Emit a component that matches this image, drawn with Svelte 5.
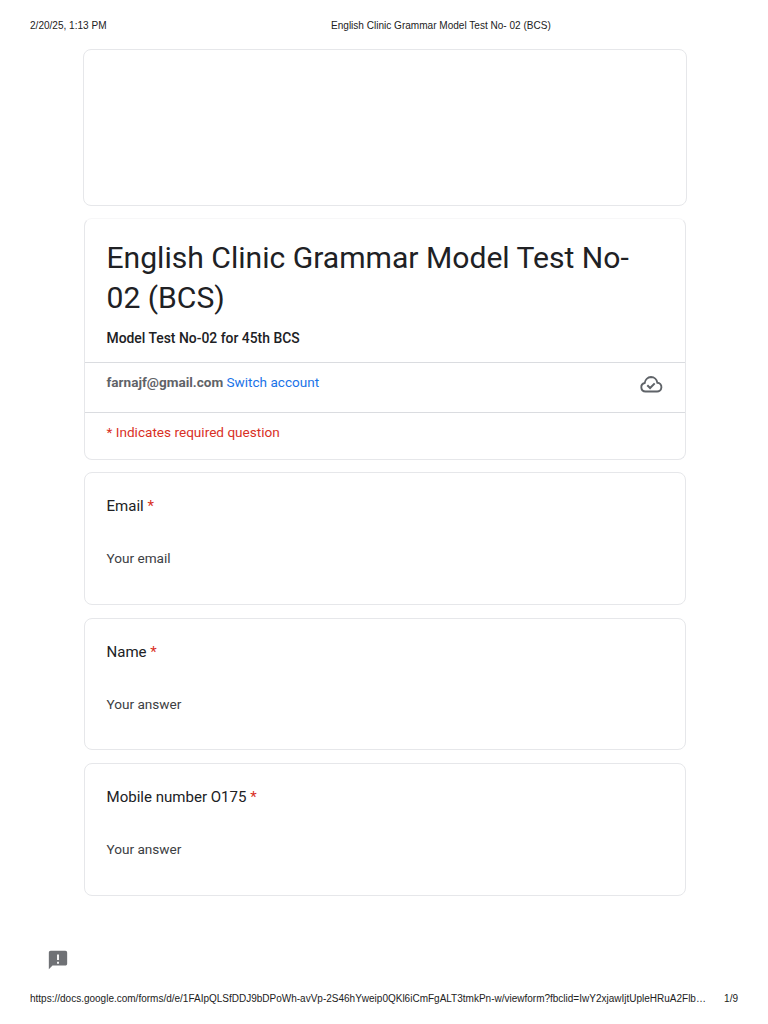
<script>
    const questions = [
        { label: "Email", hint: "Your email" },
        { label: "Name", hint: "Your answer" },
        { label: "Mobile number O175", hint: "Your answer" }
    ];
</script>

<div class="page">
    <header class="print-head">
        <span>2/20/25, 1:13 PM</span>
        <span class="doc-title">English Clinic Grammar Model Test No- 02 (BCS)</span>
    </header>

    <main class="form">
        <div class="banner"></div>

        <section class="card intro">
            <div class="intro-top">
                <h1>English Clinic Grammar Model Test No-02 (BCS)</h1>
                <p class="desc">Model Test No-02 for 45th BCS</p>
            </div>
            <div class="account">
                <div><b>farnajf@gmail.com</b> <span class="link">Switch account</span></div>
                <svg class="cloud" width="24" height="24" viewBox="0 0 24 24" fill="none" stroke="#5f6368" stroke-width="1.9">
                    <path d="M6.500 19.500a4.300 4.300 0 0 1-.8-8.500A6.800 6.800 0 0 1 12 5a6.500 6.500 0 0 1 6.300 5.700 4.400 4.400 0 0 1-.6 8.800z" />
                    <path d="M8.300 13.200l2.800 2.800 4.600-4.600" stroke-width="2" />
                </svg>
            </div>
            <div class="required">* Indicates required question</div>
        </section>

        {#each questions as q}
            <section class="card question">
                <div class="label">{q.label} <span class="star">*</span></div>
                <div class="hint">{q.hint}</div>
            </section>
        {/each}
    </main>

    <svg class="report" width="22" height="22" viewBox="0 0 24 24" fill="#6f7175">
        <path d="M20 2H4c-1.100 0-2 .9-2 2v18l4-4h14c1.100 0 2-.9 2-2V4c0-1.100-.9-2-2-2z" />
        <path d="M11 6h2v6h-2zM11 14h2v2h-2z" fill="#fff" />
    </svg>

    <footer class="print-foot">
        <span class="url">https://docs.google.com/forms/d/e/1FAIpQLSfDDJ9bDPoWh-avVp-2S46hYweip0QKl6iCmFgALT3tmkPn-w/viewform?fbclid=IwY2xjawIjtUpleHRuA2Flb…</span>
        <span>1/9</span>
    </footer>
</div>

<style>
    :global(body) {
        background: #fff;
    }

    .page {
        height: 1024px;
        box-sizing: border-box;
        padding: 19px 30px 0;
        display: flex;
        flex-direction: column;
        position: relative;
        font-family: Roboto, sans-serif;
        color: #202124;
        overflow: hidden;
    }

    .print-head,
    .print-foot {
        font-family: "Liberation Sans", Arial, sans-serif;
        font-size: 10px;
        line-height: 13px;
        color: #222;
    }

    .print-head {
        position: relative;
        height: 13px;
        font-size: 10.05px;
    }

    .doc-title {
        position: absolute;
        left: 301px;
        top: 0;
    }

    .form {
        margin: 17px 0 0 53px;
        width: 604px;
        display: flex;
        flex-direction: column;
    }

    .banner {
        height: 157px;
        border: 1.5px solid #e6e7ea;
        border-radius: 8px;
        box-sizing: border-box;
        margin-bottom: 12px;
    }

    .card {
        margin: 0 1px 13px;
        border: 1.5px solid #e6e7ea;
        border-radius: 8px;
        box-sizing: border-box;
    }

    .intro {
        height: 241.5px;
        border-top-color: #f7f7f8;
        margin-bottom: 12.5px;
        display: flex;
        flex-direction: column;
    }

    .intro-top {
        height: 144px;
        flex: none;
        box-sizing: border-box;
        padding: 19px 21.5px 0;
        border-bottom: 1px solid #dadce0;
    }

    h1 {
        margin: 0;
        padding-right: 20px;
        font-size: 30.1px;
        font-weight: 400;
        line-height: 40px;
        color: #202124;
    }

    .desc {
        margin: 11px 0 0;
        font-size: 13.9px;
        line-height: 18px;
        font-weight: 500;
        color: #202124;
    }

    .account {
        height: 50px;
        flex: none;
        box-sizing: border-box;
        padding: 10px 22px 0 21.5px;
        border-bottom: 1px solid #dadce0;
        display: flex;
        justify-content: space-between;
        font-size: 13.55px;
        line-height: 18px;
    }

    .account b {
        font-weight: 700;
        color: #5f6368;
    }

    .link {
        color: #1a73e8;
    }

    .cloud {
        margin: -1px 0 0 0;
    }

    .required {
        padding: 10px 21.5px 0;
        font-size: 13.6px;
        line-height: 18px;
        color: #d93025;
    }

    .question {
        height: 132.5px;
        padding: 23px 21.5px 0;
    }

    .label {
        font-size: 15.05px;
        line-height: 20px;
        color: #202124;
    }

    .star {
        color: #d93025;
    }

    .hint {
        margin-top: 33px;
        font-size: 13.6px;
        line-height: 18px;
        color: #3c4043;
    }

    .report {
        position: absolute;
        left: 47px;
        top: 949px;
    }

    .print-foot {
        margin-top: auto;
        margin-bottom: 19px;
        display: flex;
        justify-content: space-between;
        white-space: nowrap;
    }
</style>
